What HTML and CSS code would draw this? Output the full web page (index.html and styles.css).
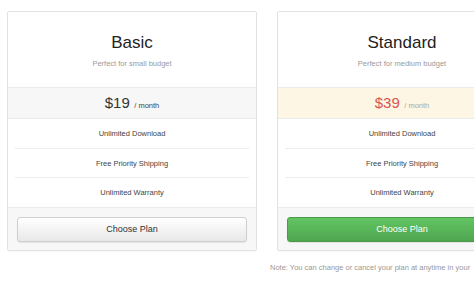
FILE: index.html
```html
<!DOCTYPE html>
<html>
<head>
<meta charset="utf-8">
<link rel="stylesheet" href="styles.css">
</head>
<body>
<div class="page">
  <div class="plans">
    <div class="plan">
      <div class="plan-head">
        <div class="plan-title">Basic</div>
        <div class="plan-sub">Perfect for small budget</div>
      </div>
      <div class="plan-price"><span class="amount">$19</span> <span class="per">/ month</span></div>
      <ul class="features">
        <li>Unlimited Download</li>
        <li>Free Priority Shipping</li>
        <li>Unlimited Warranty</li>
      </ul>
      <div class="plan-foot"><button class="btn">Choose Plan</button></div>
    </div>
    <div class="plan featured">
      <div class="plan-head">
        <div class="plan-title">Standard</div>
        <div class="plan-sub">Perfect for medium budget</div>
      </div>
      <div class="plan-price"><span class="amount">$39</span> <span class="per">/ month</span></div>
      <ul class="features">
        <li>Unlimited Download</li>
        <li>Free Priority Shipping</li>
        <li>Unlimited Warranty</li>
      </ul>
      <div class="plan-foot"><button class="btn btn-success">Choose Plan</button></div>
    </div>
  </div>
  <p class="note">Note: You can change or cancel your plan at anytime in your</p>
</div>
</body>
</html>
```
FILE: styles.css
```css
html, body {
  margin: 0;
  padding: 0;
  background: #fff;
  overflow: hidden;
}
body {
  font-family: "Liberation Sans", Arial, sans-serif;
  color: #333;
}
.page {
  width: 700px;
  padding: 11px 0 0 7px;
}
.plans {
  display: flex;
  gap: 20px;
}
.plan {
  width: 250px;
  box-sizing: border-box;
  border: 1px solid #e2e2e2;
  border-radius: 2px;
  background: #fff;
  box-shadow: 0 1px 1px rgba(0,0,0,0.03);
}
.plan-head {
  height: 75px;
  box-sizing: border-box;
  padding-top: 21px;
  text-align: center;
}
.plan-title {
  font-size: 17px;
  line-height: 20px;
  color: #222;
}
.plan-sub {
  margin-top: 6px;
  font-size: 7.5px;
  line-height: 10px;
  color: #9a9a9a;
}
.plan-price {
  height: 30px;
  line-height: 30px;
  text-align: center;
  background: #f7f7f7;
  border-top: 1px solid #ebebeb;
  border-bottom: 1px solid #ebebeb;
}
.amount {
  font-size: 15px;
  color: #333;
}
.per {
  font-size: 7.5px;
  color: #444;
}
.featured .plan-price {
  background: #fdf6e4;
}
.featured .amount {
  color: #d9534f;
}
.featured .per {
  color: #aaa;
}
.features {
  list-style: none;
  margin: 0;
  padding: 0 7px;
}
.features li {
  height: 28.5px;
  line-height: 29px;
  text-align: center;
  font-size: 7.5px;
  color: #444;
  border-bottom: 1px solid #ededed;
}
.features li:last-child {
  border-bottom: 0;
}
.plan-foot {
  background: #f7f7f7;
  border-top: 1px solid #ebebeb;
  padding: 9px 9px 8px;
}
.btn {
  display: block;
  width: 100%;
  height: 25px;
  margin: 0;
  padding: 0;
  font-family: "Liberation Sans", Arial, sans-serif;
  font-size: 9px;
  color: #333;
  background: linear-gradient(#ffffff, #e8e8e8);
  border: 1px solid #cfcfcf;
  border-radius: 3px;
  box-shadow: 0 1px 1px rgba(0,0,0,0.08);
}
.btn-success {
  color: #fff;
  background: linear-gradient(#62c462, #4fa64f);
  border-color: #4a9a4a;
}
.note {
  margin: 12px 0 0 263px;
  font-size: 7.5px;
  line-height: 10px;
  color: #999;
  white-space: nowrap;
}
```
